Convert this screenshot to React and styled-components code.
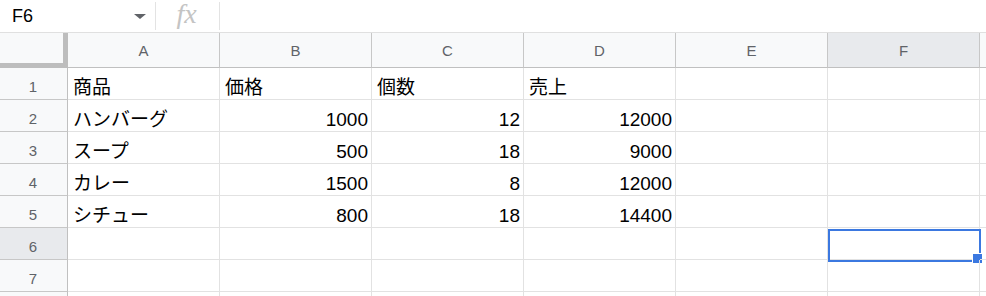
import React from "react";
import styled, { createGlobalStyle } from "styled-components";

const GlobalStyle = createGlobalStyle`
  html, body {
    margin: 0;
    padding: 0;
    background: #ffffff;
    width: 986px;
    height: 296px;
    overflow: hidden;
  }
  * { box-sizing: border-box; }
`;

const SANS = `"Liberation Sans", Arial, "Noto Sans CJK JP", sans-serif`;

const Page = styled.div`
  width: 986px;
  height: 296px;
  overflow: hidden;
  font-family: ${SANS};
  background: #fff;
`;

const FormulaBar = styled.div`
  display: flex;
  align-items: center;
  height: 33px;
  border-bottom: 1px solid #e0e0e0;
`;

const NameBox = styled.div`
  display: flex;
  align-items: center;
  width: 155px;
  height: 100%;
  padding-left: 12px;
  padding-right: 9px;
  font-size: 18px;
  color: #000;
`;

const NameText = styled.span`
  flex: 1;
`;

const Caret = styled.span`
  width: 0;
  height: 0;
  border-left: 6px solid transparent;
  border-right: 6px solid transparent;
  border-top: 5px solid #606368;
  margin-top: 1px;
`;

const Divider = styled.span`
  width: 1px;
  height: 28px;
  background: #e3e3e3;
`;

const FxBox = styled.div`
  width: 63px;
  height: 32px;
  display: flex;
  justify-content: center;
  align-items: center;
  padding-right: 2px;
`;

const FxText = styled.span`
  font-family: "Liberation Serif", "Times New Roman", serif;
  font-style: italic;
  font-size: 28px;
  line-height: 33px;
  color: #c4c4c4;
  margin-top: -6px;
`;

const Grid = styled.div`
  display: grid;
  grid-template-columns: 68px repeat(7, 152px);
  grid-template-rows: 35px repeat(8, 32px);
`;

const Corner = styled.div`
  background: #f8f9fa;
  border-right: 5px solid #bdbdbd;
  border-bottom: 5px solid #bdbdbd;
`;

const ColHeader = styled.div`
  display: flex;
  align-items: center;
  justify-content: center;
  background: ${(p) => (p.$active ? "#e8eaed" : "#f8f9fa")};
  border-right: 1px solid #c7c7c7;
  border-bottom: 1px solid #c0c0c0;
  font-size: 15px;
  color: #5f6368;
  padding-top: 1px;
`;

const RowHeader = styled.div`
  display: flex;
  align-items: center;
  justify-content: center;
  background: ${(p) => (p.$active ? "#e8eaed" : "#f8f9fa")};
  border-right: 1px solid #c0c0c0;
  border-bottom: 1px solid #c7c7c7;
  font-size: 15px;
  color: #5f6368;
  padding-top: 5px;
  padding-right: 1px;
`;

const Cell = styled.div`
  position: relative;
  display: flex;
  align-items: flex-end;
  justify-content: ${(p) => (p.$align === "right" ? "flex-end" : "flex-start")};
  border-right: 1px solid #e2e2e2;
  border-bottom: 1px solid #e2e2e2;
  padding: 0 3px 0 5px;
  font-size: 19px;
  line-height: 22px;
  color: #000;
  white-space: nowrap;
`;

const Selection = styled.div`
  position: absolute;
  left: 0;
  top: 1px;
  width: 153px;
  height: 33px;
  border: 2px solid #3b78e0;
  pointer-events: none;
`;

const Handle = styled.div`
  position: absolute;
  right: -4px;
  bottom: -4px;
  width: 11px;
  height: 11px;
  background: #3b78e0;
  border: 1px solid #ffffff;
`;

const COLS = ["A", "B", "C", "D", "E", "F", ""];

const DATA = [
  ["商品", "価格", "個数", "売上"],
  ["ハンバーグ", 1000, 12, 12000],
  ["スープ", 500, 18, 9000],
  ["カレー", 1500, 8, 12000],
  ["シチュー", 800, 18, 14400],
  [],
  [],
  [],
];

const VISIBLE_ROWS = 7;
const ACTIVE_COL = 5;
const ACTIVE_ROW = 5;

export default function App() {
  return (
    <Page>
      <GlobalStyle />
      <FormulaBar>
        <NameBox>
          <NameText>F6</NameText>
          <Caret />
        </NameBox>
        <Divider />
        <FxBox>
          <FxText>fx</FxText>
        </FxBox>
        <Divider />
      </FormulaBar>
      <Grid>
        <Corner />
        {COLS.map((c, i) => (
          <ColHeader key={i} $active={i === ACTIVE_COL}>
            {c}
          </ColHeader>
        ))}
        {DATA.map((row, r) => (
          <React.Fragment key={r}>
            <RowHeader $active={r === ACTIVE_ROW}>
              {r < VISIBLE_ROWS ? r + 1 : ""}
            </RowHeader>
            {COLS.map((c, ci) => {
              const v = row[ci];
              const isNum = typeof v === "number";
              const selected = r === ACTIVE_ROW && ci === ACTIVE_COL;
              return (
                <Cell key={ci} $align={isNum ? "right" : "left"}>
                  {v !== undefined ? v : ""}
                  {selected && (
                    <Selection>
                      <Handle />
                    </Selection>
                  )}
                </Cell>
              );
            })}
          </React.Fragment>
        ))}
      </Grid>
    </Page>
  );
}
